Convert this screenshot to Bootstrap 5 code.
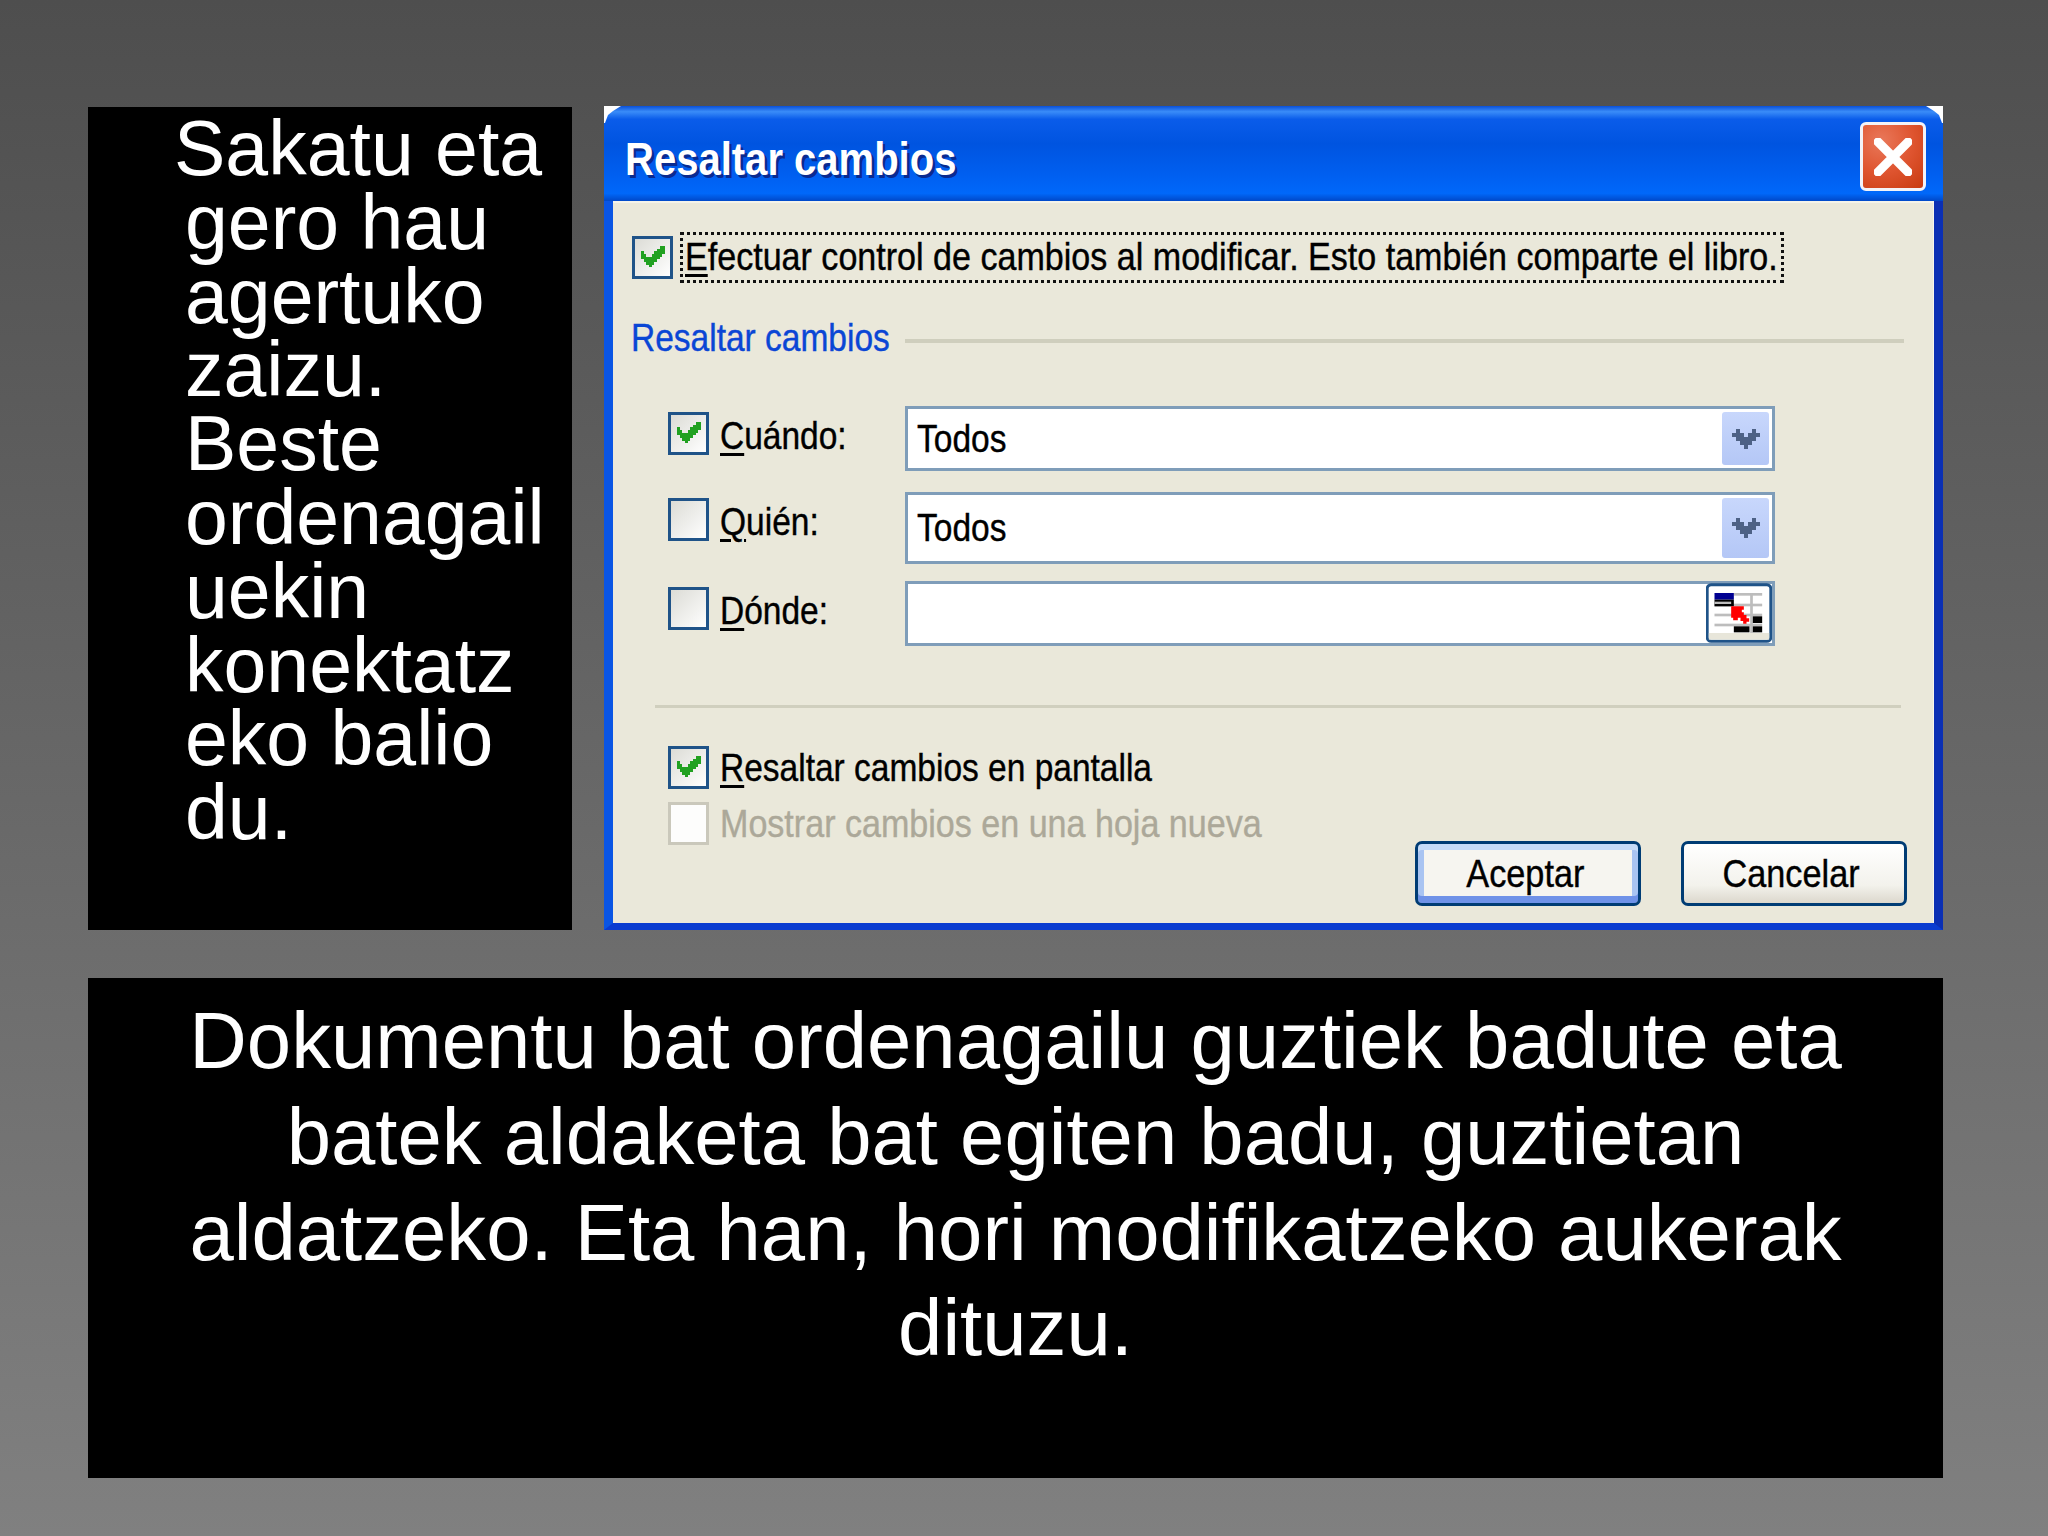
<!DOCTYPE html>
<html lang="eu">
<head>
<meta charset="utf-8">
<title>Resaltar cambios</title>
<link rel="stylesheet" href="https://cdn.jsdelivr.net/npm/bootstrap@5.3.0/dist/css/bootstrap.min.css">
<style>
html,body{margin:0;padding:0;background:#666}
.slide-page{width:2048px;height:1536px;background:linear-gradient(180deg,#4e4e4e 0%,#808080 100%);padding:0 105px 0 88px;font-family:"Liberation Sans",Arial,sans-serif;overflow:hidden}
.top-area{padding-top:106px;gap:32px}
.side-panel{width:484px;height:823px;margin-top:1px;background:#000;color:#fff;font-size:77px;line-height:73.8px;padding:5px 0 0 97px;flex:none}
.side-panel p{margin:0;text-indent:-11px;white-space:nowrap}
.bottom-panel{margin-top:48px;height:500px;background:#000;color:#fff;font-size:79.7px;line-height:95.8px;text-align:center;padding-top:15px}
.bottom-panel p{margin:0;white-space:nowrap}
.xp-window{width:1339px;height:824px;flex:none;position:relative;background:#0a50dc;border-left:9px solid #0a55e4;border-right:9px solid #0a2fb4;border-bottom:7px solid #0a3cd0;font-size:38.5px;color:#000}
.xp-text{display:inline-block;transform:scaleX(.87);transform-origin:0 50%;-webkit-text-stroke:.4px currentColor;white-space:nowrap}
.xp-text-wide{transform:scaleX(.885)}
.xp-titlebar{height:95px;margin:0 -9px;padding:0 17px 0 21px;background:linear-gradient(180deg,#0a50d8 0%,#3a8cf8 6%,#0a5cea 14%,#0054e0 40%,#005ff0 72%,#0068fa 92%,#0048c8 100%)}
.xp-title{color:#fff;font-weight:700;font-size:46px;text-shadow:3px 3px 0 #0a2a90;line-height:1;padding-top:10px;transform:scaleX(.87);transform-origin:0 50%;white-space:nowrap}
.xp-close{width:66px;height:69px;margin-top:6px;border:3px solid #f3f3f8;border-radius:6px;background:radial-gradient(circle at 30% 25%,#e9785a 0%,#df5530 50%,#c83a10 100%);padding:0;display:flex;align-items:center;justify-content:center}
.xp-corner{position:absolute;top:0;width:17px;height:17px}
.xp-corner-l{left:-9px}
.xp-corner-r{right:-9px}
.xp-client{height:722px;background:#eae8da;border-top:2px solid #f4f3ea;border-right:1px solid #f6f5ee}
.xp-focusrow{margin:29px 0 0 19px;height:51px;gap:7px}
.xp-check{width:41px;height:43px;flex:none;border:3px solid #1f5388;background:linear-gradient(135deg,#dcdcd6 0%,#f4f4f2 70%,#fff 100%);display:flex;align-items:center;justify-content:center}
.xp-check.is-off{background:#fdfdfc;border-color:#cac8bb}
.xp-check svg{width:34px;height:36px}
.xp-focus{border:3px dotted #111;height:51px;padding:0 0 0 2px;width:1104px;line-height:44px;white-space:nowrap}
u{text-decoration-thickness:3px;text-underline-offset:4px}
.xp-group{margin:32px 29px 0 18px;height:46px;gap:18px}
.xp-group-label{color:#0a46d5;width:256px;line-height:46px;flex:none}
.xp-rule{flex:1;height:4px;background:#cfcebd;margin-top:6px}
.xp-field{margin-left:55px;width:1107px}
.xp-field-a{margin-top:45px;height:65px}
.xp-field-b{margin-top:21px;height:72px}
.xp-field-c{margin-top:17px;height:65px}
.xp-label{width:237px;flex:none;gap:11px;white-space:nowrap}
.xp-check-wrap{padding-top:6px}
.xp-label span{line-height:48px}
.xp-box{flex:1;height:100%;border:3px solid #7f9db9;background:#fff;padding-left:9px;white-space:nowrap}
.xp-drop{width:47px;margin:3px 3px 3px 0;height:calc(100% - 6px);background:linear-gradient(180deg,#c8d7fc,#b4c7f6);border-radius:3px;display:flex;align-items:center;justify-content:center}
.xp-drop svg{width:28px;height:20px}
.xp-pick{width:66px;height:60px;margin-top:-1px;flex:none}
.xp-hr{margin:59px 32px 0 42px;height:3px;background:#d0cfbe}
.xp-bottom{padding:38px 26px 0 55px}
.xp-opt{height:43px;gap:11px;white-space:nowrap}
.xp-opt + .xp-opt{margin-top:13px}
.xp-off{color:#aca899}
.xp-actions{gap:40px;margin-top:95px}
.xp-btn{width:226px;height:65px;border:3px solid #003c74;border-radius:7px;background:linear-gradient(180deg,#fff 0%,#f3f2ec 70%,#dcd8cd 100%);padding:0 5px 0 0;font:inherit;color:#000}
.xp-btn .xp-text{transform-origin:50% 50%;transform:scaleX(.89)}
.xp-btn-default{box-shadow:inset 0 6px 0 #c6dbf8,inset 0 -7px 0 #6f92e8,inset 6px 0 0 #a9c4f2,inset -6px 0 0 #a9c4f2;background:#f6f5f0}
</style>
</head>
<body>
<div class="slide-page d-flex flex-column">
  <div class="top-area d-flex align-items-start">
    <div class="side-panel">
      <p>Sakatu eta<br>gero hau<br>agertuko<br>zaizu.<br>Beste<br>ordenagail<br>uekin<br>konektatz<br>eko balio<br>du.</p>
    </div>
    <div class="xp-window">
      <div class="xp-titlebar d-flex align-items-center justify-content-between">
        <div class="xp-title">Resaltar cambios</div>
        <div class="xp-close">
          <svg width="38" height="38" viewBox="0 0 38 38" aria-hidden="true"><path d="M4 4L34 34M34 4L4 34" fill="none" stroke="#fff" stroke-width="9" stroke-linecap="square"/></svg>
        </div>
      </div>
      <svg class="xp-corner xp-corner-l" viewBox="0 0 17 17" aria-hidden="true"><path d="M0 0h17L9 5 4 9 1 17H0z" fill="#fff"/></svg>
      <svg class="xp-corner xp-corner-r" viewBox="0 0 17 17" aria-hidden="true"><path d="M17 0H0l8 5 5 4 3 8h1z" fill="#fff"/></svg>
      <div class="xp-client">
        <div class="xp-focusrow d-flex align-items-center">
          <div class="xp-check"><svg viewBox="0 0 13 13" shape-rendering="crispEdges" aria-hidden="true"><path fill="#21a121" d="M9 2h2v1H9zM8 3h3v1H8zM2 4h1v1H2zM7 4h4v1H7zM2 5h2v1H2zM6 5h4v1H6zM2 6h7v1H2zM3 7h5v1H3zM4 8h3v1H4zM5 9h1v1H5z"/></svg></div>
          <div class="xp-focus"><span class="xp-text xp-text-wide"><u>E</u>fectuar control de cambios al modificar. Esto también comparte el libro.</span></div>
        </div>
        <div class="xp-group d-flex align-items-center">
          <span class="xp-group-label"><span class="xp-text">Resaltar cambios</span></span>
          <span class="xp-rule"></span>
        </div>
        <div class="xp-field xp-field-a d-flex">
          <div class="xp-label d-flex align-items-start xp-check-wrap">
            <div class="xp-check"><svg viewBox="0 0 13 13" shape-rendering="crispEdges" aria-hidden="true"><path fill="#21a121" d="M9 2h2v1H9zM8 3h3v1H8zM2 4h1v1H2zM7 4h4v1H7zM2 5h2v1H2zM6 5h4v1H6zM2 6h7v1H2zM3 7h5v1H3zM4 8h3v1H4zM5 9h1v1H5z"/></svg></div>
            <span class="xp-text"><u>C</u>uándo:</span>
          </div>
          <div class="xp-box d-flex align-items-center justify-content-between">
            <span class="xp-text">Todos</span>
            <div class="xp-drop"><svg viewBox="0 0 7 5" shape-rendering="crispEdges" aria-hidden="true"><path fill="#4d6185" d="M1 0h1v1H1zM5 0h1v1H5zM0 1h3v1H0zM4 1h3v1H4zM1 2h5v1H1zM2 3h3v1H2zM3 4h1v1H3z"/></svg></div>
          </div>
        </div>
        <div class="xp-field xp-field-b d-flex">
          <div class="xp-label d-flex align-items-start xp-check-wrap">
            <div class="xp-check"></div>
            <span class="xp-text"><u>Q</u>uién:</span>
          </div>
          <div class="xp-box d-flex align-items-center justify-content-between">
            <span class="xp-text">Todos</span>
            <div class="xp-drop"><svg viewBox="0 0 7 5" shape-rendering="crispEdges" aria-hidden="true"><path fill="#4d6185" d="M1 0h1v1H1zM5 0h1v1H5zM0 1h3v1H0zM4 1h3v1H4zM1 2h5v1H1zM2 3h3v1H2zM3 4h1v1H3z"/></svg></div>
          </div>
        </div>
        <div class="xp-field xp-field-c d-flex">
          <div class="xp-label d-flex align-items-start xp-check-wrap">
            <div class="xp-check"></div>
            <span class="xp-text"><u>D</u>ónde:</span>
          </div>
          <div class="xp-box d-flex align-items-center justify-content-end">
            <svg class="xp-pick" viewBox="0 0 197 180" aria-hidden="true">
              <rect x="3" y="5" width="191" height="170" rx="12" fill="#fff" stroke="#1f5388" stroke-width="9"/>
              <rect x="8" y="150" width="181" height="20" fill="#e8e6da"/>
              <g fill="#bdbdbd">
                <rect x="83" y="30" width="85" height="8"/><rect x="25" y="62" width="143" height="8"/>
                <rect x="25" y="92" width="143" height="8"/><rect x="25" y="122" width="143" height="8"/>
                <rect x="132" y="30" width="8" height="120"/>
              </g>
              <rect x="25" y="30" width="58" height="20" fill="#000091"/>
              <rect x="25" y="50" width="58" height="20" fill="#000"/>
              <rect x="25" y="56" width="50" height="7" fill="#bdbdbd"/>
              <rect x="140" y="100" width="28" height="20" fill="#000"/>
              <rect x="83" y="130" width="47" height="18" fill="#000"/>
              <rect x="140" y="130" width="28" height="18" fill="#000"/>
              <path d="M75 70h38v10h-6v8h6v8h8v10h8v10h-8v6h-10v-8h-8v-10h-8v8h-14v-8h-6z" fill="#f00"/>
            </svg>
          </div>
        </div>
        <div class="xp-hr"></div>
        <div class="xp-bottom d-flex justify-content-between">
          <div>
            <div class="xp-opt d-flex align-items-center">
              <div class="xp-check"><svg viewBox="0 0 13 13" shape-rendering="crispEdges" aria-hidden="true"><path fill="#21a121" d="M9 2h2v1H9zM8 3h3v1H8zM2 4h1v1H2zM7 4h4v1H7zM2 5h2v1H2zM6 5h4v1H6zM2 6h7v1H2zM3 7h5v1H3zM4 8h3v1H4zM5 9h1v1H5z"/></svg></div>
              <span class="xp-text"><u>R</u>esaltar cambios en pantalla</span>
            </div>
            <div class="xp-opt d-flex align-items-center xp-off">
              <div class="xp-check is-off"></div>
              <span class="xp-text xp-text-wide">Mostrar cambios en una hoja nueva</span>
            </div>
          </div>
          <div class="xp-actions d-flex align-items-start">
            <button type="button" class="xp-btn xp-btn-default"><span class="xp-text">Aceptar</span></button>
            <button type="button" class="xp-btn"><span class="xp-text">Cancelar</span></button>
          </div>
        </div>
      </div>
    </div>
  </div>
  <div class="bottom-panel">
    <p>Dokumentu bat ordenagailu guztiek badute eta</p>
    <p>batek aldaketa bat egiten badu, guztietan</p>
    <p>aldatzeko. Eta han, hori modifikatzeko aukerak</p>
    <p>dituzu.</p>
  </div>
</div>
<script src="https://cdn.jsdelivr.net/npm/bootstrap@5.3.0/dist/js/bootstrap.bundle.min.js"></script>
</body>
</html>
